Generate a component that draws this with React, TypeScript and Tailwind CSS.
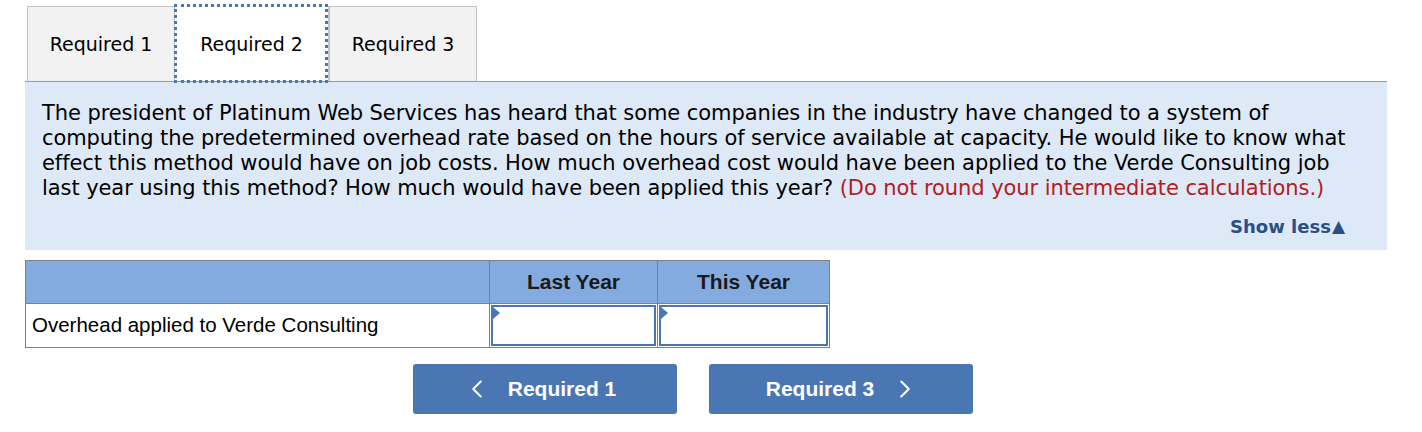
import { ChevronLeft, ChevronRight } from 'lucide-react';

const tabs = ['Required 1', 'Required 2', 'Required 3'];

function Tab({ label, active }: { label: string; active: boolean }) {
  if (active) {
    return (
      <div className="relative w-[154px] h-[75px] -mb-px pt-[2px] bg-white border-r border-[#c4c4c4] flex items-center justify-center text-[19px] text-black">
        <div className="absolute -left-[1px] right-0 -top-[2px] -bottom-[2px] border-[3px] border-dotted border-[#4a76b3]" />
        {label}
      </div>
    );
  }
  return (
    <div className="w-[148px] h-[75px] bg-[#f2f2f2] border-x border-t border-[#c4c4c4] flex items-center justify-center text-[19px] text-black">
      {label}
    </div>
  );
}

function AmountInput() {
  return (
    <div className="relative h-full border-2 border-[#4a76b3] bg-white">
      <span className="absolute left-0 top-0 w-0 h-0 border-t-[6px] border-b-[6px] border-l-[7px] border-t-transparent border-b-transparent border-l-[#4a76b3]" />
    </div>
  );
}

export default function App() {
  return (
    <div className="w-[1422px] h-[432px] bg-white pl-[25px] pr-[35px] pt-[6px] font-['DejaVu_Sans',Verdana,sans-serif]">
      <div className="flex pl-[2px] border-b border-[#999]">
        {tabs.map((t, i) => (
          <Tab key={t} label={t} active={i === 1} />
        ))}
      </div>

      <div className="bg-[#dde9f7] px-[17px] pt-[19px] h-[168px]">
        <p className="text-[21px] leading-[25px] tracking-[-0.08px] text-black whitespace-nowrap">
          The president of Platinum Web Services has heard that some companies in the industry have changed to a system of
          <br />
          computing the predetermined overhead rate based on the hours of service available at capacity. He would like to know what
          <br />
          effect this method would have on job costs. How much overhead cost would have been applied to the Verde Consulting job
          <br />
          last year using this method? How much would have been applied this year?{' '}
          <span className="text-[#b0201e]">(Do not round your intermediate calculations.)</span>
        </p>
        <div className="flex justify-end mt-[12px] pr-[25px]">
          <span className="text-[18px] font-bold text-[#2b4e87] flex items-center gap-[1px]">
            Show less<span className="text-[17px] leading-none">▲</span>
          </span>
        </div>
      </div>

      <table className="mt-[10px] border-collapse font-['Liberation_Sans',Arial,sans-serif] text-black">
        <thead>
          <tr className="h-[43px] bg-[#84abdf]">
            <th className="w-[464px] border border-[#808080]" />
            <th className="w-[168px] border border-[#808080] text-[21px] font-bold text-[#1a1a1a]">Last Year</th>
            <th className="w-[172px] border border-[#808080] text-[21px] font-bold text-[#1a1a1a]">This Year</th>
          </tr>
        </thead>
        <tbody>
          <tr className="h-[44px]">
            <td className="border border-[#808080] px-[6px] text-[20.5px]">Overhead applied to Verde Consulting</td>
            <td className="border border-[#808080] p-[1px] h-[44px]">
              <AmountInput />
            </td>
            <td className="border border-[#808080] p-[1px] h-[44px]">
              <AmountInput />
            </td>
          </tr>
        </tbody>
      </table>

      <div className="flex gap-[32px] mt-[16px] pl-[388px] font-['Liberation_Sans',Arial,sans-serif]">
        <button className="w-[264px] h-[50px] pr-[12px] rounded-[3px] bg-[#4a76b3] text-white text-[21px] font-bold flex items-center justify-center gap-[16px]">
          <ChevronLeft size={30} strokeWidth={1.6} />
          <span>Required 1</span>
        </button>
        <button className="w-[264px] h-[50px] pl-[4px] rounded-[3px] bg-[#4a76b3] text-white text-[21px] font-bold flex items-center justify-center gap-[16px]">
          <span>Required 3</span>
          <ChevronRight size={30} strokeWidth={1.6} />
        </button>
      </div>
    </div>
  );
}
